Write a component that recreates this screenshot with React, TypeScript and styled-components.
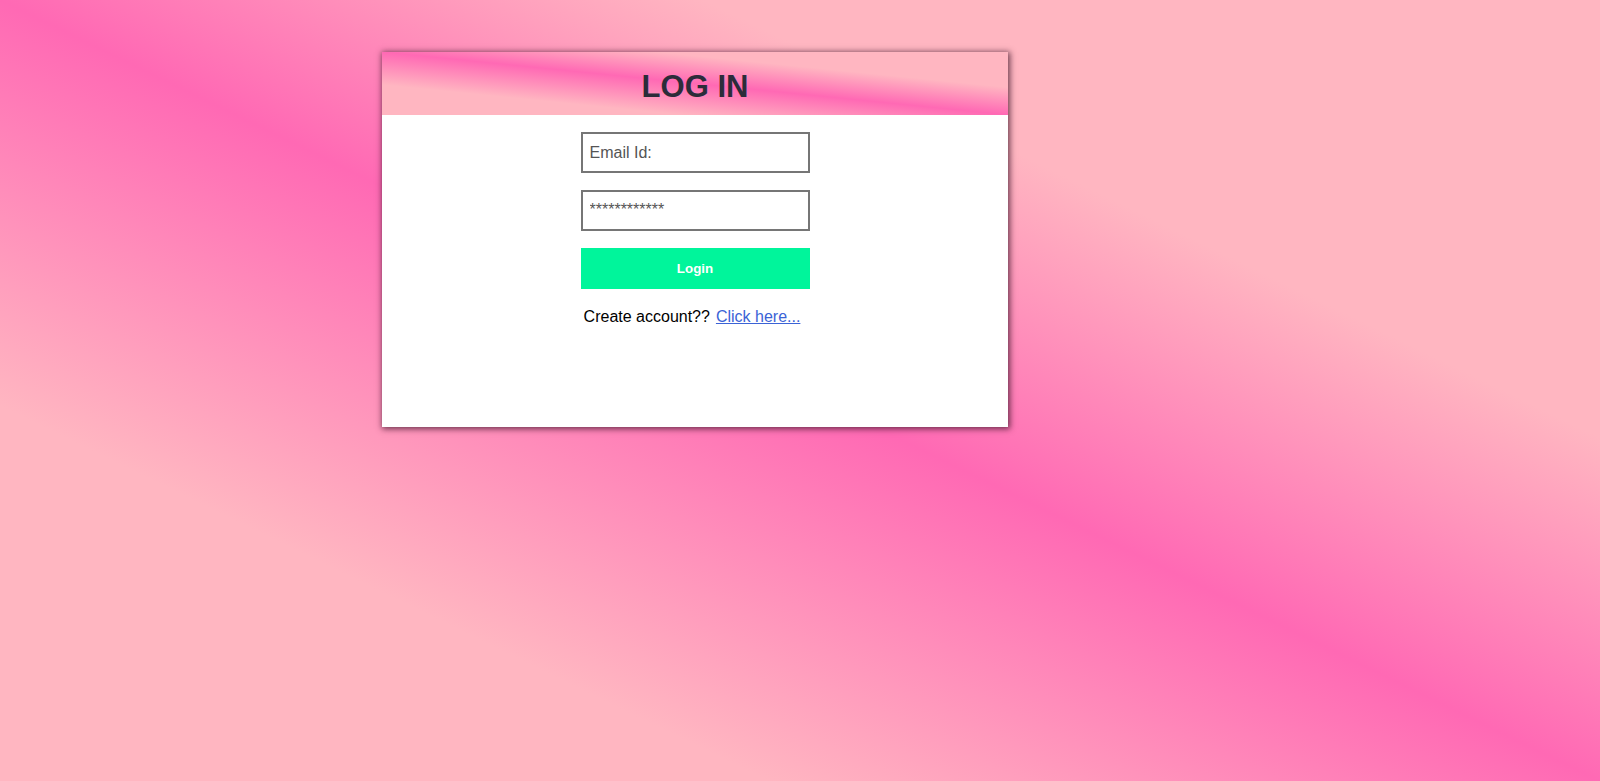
import React from 'react';
import styled, { createGlobalStyle } from 'styled-components';

const GlobalStyle = createGlobalStyle`
  html, body {
    margin: 0;
    padding: 0;
  }
  body {
    font-family: "Liberation Sans", Arial, sans-serif;
  }
`;

const pinkStripe = `linear-gradient(to top right, #ffb6c1 0%, #ffb6c1 24%, #ff69b4 50%, #ffb6c1 72%, #ffb6c1 100%)`;

const Page = styled.div`
  width: 100%;
  min-height: 781px;
  box-sizing: border-box;
  padding: 52px 0 0 382px;
  background: ${pinkStripe};
`;

const Card = styled.div`
  width: 626px;
  height: 375px;
  background: #fff;
  box-shadow: 1px 1px 6px 1px rgba(60, 20, 40, 0.75);
  display: flex;
  flex-direction: column;
`;

const Header = styled.div`
  height: 63px;
  background: ${pinkStripe};
  display: flex;
  align-items: center;
  justify-content: center;
`;

const Title = styled.h1`
  margin: 0;
  padding-top: 6px;
  font-size: 31px;
  font-weight: bold;
  color: #2c2c3a;
`;

const Form = styled.form`
  display: flex;
  flex-direction: column;
  align-items: center;
  gap: 17px;
  padding-top: 17px;
`;

const Field = styled.input`
  width: 229px;
  height: 41px;
  box-sizing: border-box;
  border: 2px solid #767676;
  padding: 0 7px;
  font-family: "Liberation Sans", Arial, sans-serif;
  font-size: 16px;
  color: #333;
  outline: none;

  &::placeholder {
    color: #555;
  }
`;

const PasswordField = styled(Field)`
  padding-bottom: 2px;
`;

const LoginButton = styled.button`
  width: 229px;
  height: 41px;
  border: none;
  background: #00f59b;
  color: #fff;
  font-family: "Liberation Sans", Arial, sans-serif;
  font-size: 13.33px;
  font-weight: bold;
  cursor: pointer;
`;

const Footer = styled.div`
  display: flex;
  align-items: baseline;
  gap: 6px;
  margin: 2px 6px 0 0;
  font-size: 16px;
  color: #000;
`;

const Link = styled.a`
  color: #3b63d6;
  text-decoration: underline;
`;

const App = () => (
  <>
    <GlobalStyle />
    <Page>
      <Card>
        <Header>
          <Title>LOG IN</Title>
        </Header>
        <Form onSubmit={(e) => e.preventDefault()}>
          <Field type="text" placeholder="Email Id:" />
          <PasswordField type="text" placeholder="************" />
          <LoginButton type="submit">Login</LoginButton>
          <Footer>
            <span>Create account??</span>
            <Link href="#">Click here...</Link>
          </Footer>
        </Form>
      </Card>
    </Page>
  </>
);

export default App;
